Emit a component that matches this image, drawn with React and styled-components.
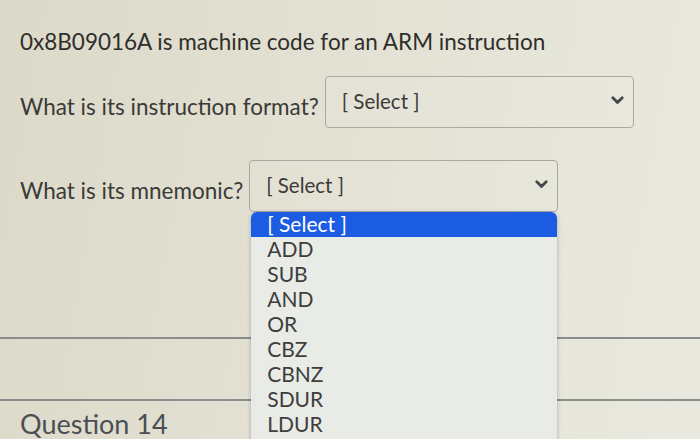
import React from "react";
import styled, { createGlobalStyle } from "styled-components";

const Global = createGlobalStyle`
  html, body {
    margin: 0;
    height: 100%;
  }
  body {
    font-family: Lato, "Liberation Sans", sans-serif;
    background: linear-gradient(100deg, #dcd9c9 0%, #e3e1d3 45%, #e9e9df 100%);
    overflow: hidden;
  }
`;

const Page = styled.div`
  width: 700px;
  height: 439px;
  overflow: hidden;
  padding: 0 20px;
  box-sizing: border-box;
`;

const Title = styled.div`
  margin-top: 28px;
  font-size: 22.5px;
  line-height: 28px;
  color: #2e2e2c;
`;

const Row = styled.div`
  display: flex;
  align-items: center;
  gap: 6px;
  margin-top: ${(p) => p.$top}px;
`;

const Label = styled.span`
  font-size: 22.5px;
  line-height: 26px;
  color: #3a3a38;
  padding-top: 10px;
  white-space: nowrap;
`;

const SelectWrap = styled.div`
  position: relative;
`;

const SelectBox = styled.div`
  width: 309px;
  height: 52px;
  box-sizing: border-box;
  border: 1px solid #a9a9a2;
  border-radius: 4px;
  display: flex;
  align-items: center;
  justify-content: space-between;
  padding: 0 9px 3px 16px;
  font-size: 20.5px;
  color: #3c3c3a;
  background: rgba(255, 255, 255, 0.06);
`;

const Chevron = () => (
  <svg width="13" height="9" viewBox="0 0 13 9">
    <polyline
      points="1.8,1.8 6.5,6.6 11.2,1.8"
      fill="none"
      stroke="#45464a"
      strokeWidth="2.8"
      strokeLinecap="round"
      strokeLinejoin="round"
    />
  </svg>
);

const Menu = styled.ul`
  position: absolute;
  top: 52px;
  left: 2px;
  width: 306px;
  margin: 0;
  padding: 0 0 8px;
  list-style: none;
  background: #e9ebe7;
  border-radius: 6px;
  box-shadow: 0 1px 4px rgba(0, 0, 0, 0.25);
  z-index: 5;
`;

const Item = styled.li`
  height: 25px;
  line-height: 24px;
  padding-left: 16px;
  font-size: 21px;
  color: ${(p) => (p.$active ? "#ffffff" : "#3d3d3d")};
  background: ${(p) => (p.$active ? "#1c5ce2" : "transparent")};
  border-radius: ${(p) => (p.$active ? "6px 6px 0 0" : "0")};
`;

const Divider = styled.div`
  height: 2px;
  background: #8b8d8d;
  margin: ${(p) => p.$top}px -20px 0;
`;

const QuestionTitle = styled.h2`
  margin: 8px 0 0;
  font-size: 27px;
  line-height: 30px;
  font-weight: 400;
  color: #4a4f55;
`;

const options = ["[ Select ]", "ADD", "SUB", "AND", "OR", "CBZ", "CBNZ", "SDUR", "LDUR"];

export default function App() {
  return (
    <>
      <Global />
      <Page>
        <Title>0x8B09016A is machine code for an ARM instruction</Title>
        <Row $top={20}>
          <Label>What is its instruction format?</Label>
          <SelectBox>
            <span>[ Select ]</span>
            <Chevron />
          </SelectBox>
        </Row>
        <Row $top={32}>
          <Label>What is its mnemonic?</Label>
          <SelectWrap>
            <SelectBox>
              <span>[ Select ]</span>
              <Chevron />
            </SelectBox>
            <Menu>
              {options.map((o, i) => (
                <Item key={o} $active={i === 0}>
                  {o}
                </Item>
              ))}
            </Menu>
          </SelectWrap>
        </Row>
        <Divider $top={125} />
        <Divider $top={60} />
        <QuestionTitle>Question 14</QuestionTitle>
      </Page>
    </>
  );
}
